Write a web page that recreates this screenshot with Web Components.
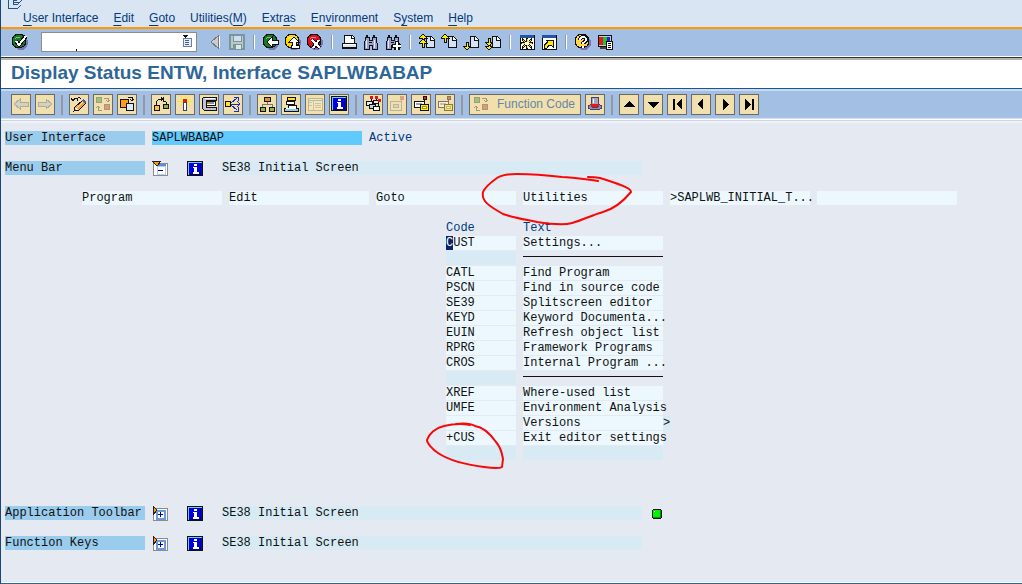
<!DOCTYPE html>
<html lang="en">
<head>
<meta charset="utf-8">
<title>Display Status ENTW, Interface SAPLWBABAP</title>
<style>
  body {
    margin: 0;
    font-family: "Liberation Sans", Arial, sans-serif;
    font-size: 12px;
    background: #e5eaf2;
  }
</style>
</head>
<body>
<status-window></status-window>

<script>
/**
 * Icon drawings, all on a 16x16 grid.
 */
const shadow = '<circle cx="9" cy="9" r="7" fill="#7878b4"/>'
const page = '<path d="M7 2h5l3 3v8H7z" fill="#d4e4f6" stroke="#111"/><path d="M11 2v4h4" fill="#fff" stroke="#111"/>'
const binoculars = '<path d="M2 3h4v3h3V3h4v4l1 2v6H9v-4H6v4H1V9l1-2z" fill="#9aa0c8" stroke="#111"/><path d="M3 1h2v2H3zM10 1h2v2h-2zM6 8h3v1H6z" fill="#111"/><path d="M3 6v8M11 6v8" stroke="#e4e8fa"/>'
const upArrow = '<path d="M4 0l4 4H5v4H3V4H0z" fill="#ffeb00" stroke="#111"/>'
const downArrow = '<path d="M4 16l4-4H5V8H3v4H0z" fill="#ffeb00" stroke="#111"/>'
const folders = '<path d="M1 5h10v6H1z" fill="#fff" stroke="#111"/><path d="M3 7h6v2H3z" fill="#9aa0c8"/><path d="M7 8h8v6H7z" fill="#fff000" stroke="#111"/><path d="M9 10h4v2H9z" fill="#fff" stroke="#a89800"/><path d="M11 7V3" stroke="#111"/><path d="M10 0h4v4h-4z" fill="#111"/><path d="M11 1h2v2h-2z" fill="#e82020"/>'

const icons = {
  ok: shadow + '<circle cx="7" cy="7" r="7" fill="#187a28" stroke="#111"/><path d="M3 5l2-2h3" stroke="#7ccc66" fill="none"/><path d="M4 7l3 4 7-9" fill="none" stroke="#111" stroke-width="4"/><path d="M4 7l3 4 7-9" fill="none" stroke="#fff" stroke-width="2"/>',
  triangle: '<path d="M11 2v12L4 8z" fill="#c8ccd4" stroke="#777"/><path d="M12 2v12" stroke="#fff"/>',
  save: '<path d="M1 1h14v14H1z" fill="#b4cbc6" stroke="#7c949c" stroke-width="2"/><path d="M4 1h8v6H4z" fill="#cfdff0" stroke="#7c949c"/><path d="M4 10h8v5H4z" fill="#dfe6ec" stroke="#7c949c"/><path d="M5 11h2v4H5z" fill="#7c949c"/>',
  back: shadow + '<circle cx="7" cy="7" r="7" fill="#187a28" stroke="#111"/><path d="M3 5l2-2h4" stroke="#7ccc66" fill="none"/><path d="M4 8l5-5v3h6v4H9v3z" fill="#fff" stroke="#111"/>',
  exit: shadow + '<circle cx="7" cy="7" r="7" fill="#ffd400" stroke="#111"/><path d="M3 5l2-2h4" stroke="#fff68a" fill="none"/><path d="M9 3l5 5h-3v3h3v3H6v-3h1V8H4z" fill="#fff" stroke="#111"/>',
  cancel: shadow + '<circle cx="7" cy="7" r="7" fill="#dc1020" stroke="#111"/><path d="M3 5l2-2h4" stroke="#ff8080" fill="none"/><path d="M5 6l8 8M12 6l-6 8" stroke="#111" stroke-width="4"/><path d="M5 6l8 8M12 6l-6 8" stroke="#fff" stroke-width="2"/>',
  print: '<path d="M3 1h8l2 2v7H3z" fill="#fff" stroke="#111"/><path d="M10 1v3h3" fill="none" stroke="#111"/><path d="M1 9h14v5H1z" fill="#dde4f0" stroke="#111"/><path d="M2 10h12" stroke="#fff"/><path d="M2 14h13" stroke="#111" stroke-width="2"/>',
  find: binoculars,
  findNext: binoculars + '<path d="M10 7h3v3h3v3h-3v3h-3v-3H7v-3h3z" fill="#fff" stroke="#111"/>',
  firstPage: page + upArrow + '<path d="M4 5l4 4H5v4H3V9H0z" fill="#ffeb00" stroke="#111"/>',
  prevPage: page + upArrow,
  nextPage: page + downArrow,
  lastPage: page + downArrow + '<path d="M4 12l4-4H5V4H3v4H0z" fill="#ffeb00" stroke="#111"/>',
  session: '<path d="M1 1h14v14H1z" fill="#fff" stroke="#111"/><path d="M1 1h14v3H1z" fill="#2454a4"/><path d="M3 5l10 9M13 5L3 14M8 4v11M2 9h12" stroke="#111" stroke-width="2"/><path d="M4 6l8 7M12 6l-8 7M8 5v9M3 9h10" stroke="#ffeb00"/><path d="M6 8h4v3H6z" fill="#fff"/>',
  shortcut: '<path d="M1 1h14v14H1z" fill="#fff" stroke="#111"/><path d="M1 1h14v3H1z" fill="#2454a4"/><path d="M3 14c0-4 2-5 4-6L5 6h7v7l-2-2c-3 0-3 1-4 3z" fill="#ffeb00" stroke="#111"/>',
  help: shadow + '<circle cx="7" cy="7" r="7" fill="#ffd850" stroke="#111"/><path d="M5 6c0-4 6-4 6 0 0 2-3 2-3 4M8 12v2" fill="none" stroke="#111" stroke-width="4"/><path d="M5 6c0-4 6-4 6 0 0 2-3 2-3 4M8 12v2" fill="none" stroke="#fff" stroke-width="2"/>',
  layout: '<path d="M1 1h13v11H1z" fill="#c8ccd8" stroke="#111"/><path d="M2 3h4v8H2z" fill="#e81818"/><path d="M6 3h4v8H6z" fill="#18c828"/><path d="M10 3h3v5h-3z" fill="#2020e0"/><path d="M3 13h6v2H3z" fill="#444"/><path d="M9 7h6v8H9z" fill="#fff" stroke="#111"/><path d="M11 9h3M11 11h3M11 13h3" stroke="#111"/>',
  arrowLeft: '<path d="M1 8l6-5v3h8v4H7v3z" fill="#b4c6d0" stroke="#6c7c88"/>',
  arrowRight: '<path d="M15 8L9 3v3H1v4h8v3z" fill="#b4c6d0" stroke="#6c7c88"/>',
  display: '<path d="M0 2l2 3 2-3 2 1 2-2 2 2M6 3v2" fill="none" stroke="#111"/><path d="M12 4l3 3-7 7-5 1 1-4z" fill="#f4a038" stroke="#111"/><path d="M12 6l-6 6" stroke="#ffe4b0"/><path d="M4 12l3 2" stroke="#fff"/><path d="M12 4l3 3" stroke="#4060c0" stroke-width="2"/>',
  cycle: '<circle cx="4" cy="4" r="3" fill="#3cb43c" stroke="#555"/><circle cx="12" cy="11" r="3" fill="#d85030" stroke="#555"/><path d="M9 2h4v4M11 4l2 2 2-2M7 14H3v-4M1 12l2-2 2 2" fill="none" stroke="#555"/>',
  other: '<path d="M1 3h8v8H1z" fill="#ff9c18" stroke="#111"/><path d="M7 7h7v7H7z" fill="#dcecff" stroke="#111"/><path d="M9 1h4v4M11 3l2 2 2-2" fill="none" stroke="#111"/>',
  path: '<path d="M3 9V6l3-3h2M10 1v4l3 1v2" fill="none" stroke="#111"/><path d="M8 1l3 2-3 2z" fill="#111"/><path d="M1 9h5v5H1z" fill="#ffc040" stroke="#111"/><path d="M10 8h5v4h-5z" fill="#90b040" stroke="#111"/>',
  wand: '<path d="M8 0v4M1 5h14M3 0l10 10M13 0L3 10" stroke="#fff000"/><path d="M6 3h4v3H6z" fill="#e81818"/><path d="M6 6h4v9H6z" fill="#3c3c78"/><path d="M7 7h2v7H7z" fill="#fff"/>',
  clamp: '<path d="M3 1h12v3H5v7h10v3H3l-2-2V3z" fill="#bcc4d8" stroke="#111"/><path d="M5 5h9v4H5z" fill="#fff" stroke="#111"/><path d="M6 6h3v2H6z" fill="#e08020"/><path d="M9 6h4v2H9z" fill="#8090c0"/><path d="M4 2h10" stroke="#fff"/>',
  spread: '<path d="M5 8h10M6 7l6-5M6 9l6 5" stroke="#1830b0"/><path d="M9 1h4v4M9 15h4v-4M12 5l3 3-3 3" fill="none" stroke="#1830b0"/><path d="M0 5h6v6H0z" fill="#111"/><path d="M1 6h4v4H1z" fill="#ffe028"/>',
  hierarchy: '<path d="M8 5v4M3 11V8h10v3" fill="none" stroke="#777"/><path d="M5 1h6v4H5z" fill="#e88c28" stroke="#111"/><path d="M1 11h5v4H1zM10 11h5v4h-5z" fill="#98b040" stroke="#111"/>',
  stack: '<path d="M4 1h8v3H4z" fill="#ffe028" stroke="#111"/><path d="M3 5h8v3H3zM5 9h8v3H5z" fill="#fff" stroke="#111"/><path d="M1 12h14v3H1z" fill="#90c8e8" stroke="#111"/><path d="M3 12h10v1H3z" fill="#fff"/>',
  list: '<path d="M1 2h14v12H1z" fill="#f7edd1" stroke="#918b78"/><path d="M1 4h14" stroke="#58a0a8"/><path d="M6 4v10M2 6h3M2 9h3M8 7h6M8 9h6M8 11h6" stroke="#a6a08b"/>',
  info: '<path d="M0 0h16v15H0z" fill="#111"/><path d="M1 1h14v13H1z" fill="#0000d8"/><path d="M1 1h14v1H2v12H1z" fill="#68d0f8"/><path d="M14 2v12H2v-1h11V2z" fill="#000078"/><rect x="7" y="3" width="3" height="2" fill="#fff"/><rect x="6" y="6" width="4" height="1" fill="#fff"/><rect x="7" y="7" width="3" height="4" fill="#fff"/><rect x="6" y="11" width="6" height="2" fill="#fff"/>',
  cluster: '<path d="M1 5h6v4H1zM8 4h5v3H8z" fill="#e8eaf8" stroke="#111"/><path d="M4 8h6v4H4z" fill="#c8cce4" stroke="#111"/><path d="M8 10h6v4H8z" fill="#fff" stroke="#111"/><path d="M6 5V2M11 5V2M13 10V6" stroke="#111"/><path d="M5 0h3v3H5zM10 0h3v3h-3zM13 3h3v3h-3z" fill="#d81818"/>',
  single: '<path d="M1 5h11v9H1z" fill="#eee0b8" stroke="#888"/><path d="M4 8h5v3H4z" fill="#d5c9a3" stroke="#888"/><path d="M12 6V2" stroke="#888"/><path d="M11 0h4v4h-4z" fill="#c86858"/>',
  folders: folders,
  hat: '<ellipse cx="8" cy="11" rx="7" ry="3" fill="#8c8cc0" stroke="#444466"/><path d="M4 2c2-1 6-1 8 0l-1 9c-2 1-4 1-6 0z" fill="#a4a4c4" stroke="#444466"/><path d="M4 7c2 2 6 2 8 0v3c-2 2-6 2-8 0z" fill="#e81818"/><path d="M6 3v4" stroke="#fff"/>',
  up: '<path d="M8 5l6 6H2z"/>',
  down: '<path d="M8 12L2 6h12z"/>',
  first: '<path d="M4 3h2v11H4zM13 3v11L7 8z"/>',
  prev: '<path d="M10 3v11L4 8z"/>',
  next: '<path d="M6 3v11l6-6z"/>',
  last: '<path d="M11 3h2v11h-2zM4 3v11l6-6z"/>',
  collapse: '<path d="M1 2h14v12H1z" fill="#fff" stroke="#8c8c8c"/><path d="M5 5h8v8H5z" fill="#fff" stroke="#b8ccf0"/><path d="M5 4h9" stroke="#5888d8" stroke-width="2"/><path d="M6 9h5" stroke="#000090"/><path d="M0 0h9L5 5z" fill="#ff9c00" stroke="#222"/>',
  expand: '<path d="M1 2h14v12H1z" fill="#fff" stroke="#8c8c8c"/><path d="M5 5h8v8H5z" fill="#fff" stroke="#6898e0" stroke-width="2"/><path d="M6 8h5v1H6zM8 6h1v5H8z" fill="#000090"/><path d="M1 0v9l4-5z" fill="#ff9c00" stroke="#222"/>',
  led: '<path d="M4 3h8v1h1v8h-1v1H4v-1H3V4h1z" fill="#111"/><path d="M4 4h8v8H4z" fill="#009000"/><path d="M4 4h7v7H4z" fill="#00f400"/><path d="M5 5h1v1H5z" fill="#fff"/>',
  window: '<path d="M1 0v8h10l3-3" fill="none" stroke="#245486"/><path d="M15 0l-4 4H6V0h4" fill="none" stroke="#245486"/><path d="M6 2h6" stroke="#245486"/>',
  history: '<path d="M5 4h8v8H5z" fill="#e6eef8" stroke="#68809c"/><path d="M7 6h4M7 8h4M7 10h4" stroke="#446088"/><path d="M4 1h6L7 4z" fill="#111"/>'
}

customElements.define('sap-icon',
  class extends HTMLElement {
    constructor () {
      super()
      this.attachShadow({ mode: 'open' })
      this.shadowRoot.innerHTML = `
        <style>
          :host { display: block; width: 16px; height: 16px; flex: none; }
          svg { display: block; }
        </style>
        <svg width="16" height="16" viewBox="0 0 16 16" aria-hidden="true"
          shape-rendering="crispEdges">${icons[this.getAttribute('name')]}</svg>`
    }
  }
)

/**
 * Menu bar entry, the access key is underlined.
 */
customElements.define('menu-entry',
  class extends HTMLElement {
    constructor () {
      super()
      this.attachShadow({ mode: 'open' })
      this.shadowRoot.innerHTML = `
        <style>
          :host { display: block; }
          button {
            border: 0;
            padding: 0;
            background: none;
            font: inherit;
            color: inherit;
            line-height: 16px;
          }
          ::slotted(u) { text-underline-offset: 3px; }
        </style>
        <button type="button" role="menuitem"><slot></slot></button>`
    }
  }
)

customElements.define('menu-bar',
  class extends HTMLElement {
    constructor () {
      super()
      this.attachShadow({ mode: 'open' })
      this.shadowRoot.innerHTML = `
        <style>
          :host {
            display: block;
            height: 27px;
            background: #dae5f3;
            border-bottom: 2px solid #ff9900;
            color: #003a7c;
            overflow: hidden;
          }
          .system { height: 10px; padding-left: 6px; overflow: hidden; }
          nav { display: flex; gap: 15px; padding-left: 22px; }
        </style>
        <div class="system"><sap-icon name="window"></sap-icon></div>
        <nav role="menubar" aria-label="Main menu">
          <menu-entry><u>U</u>ser Interface</menu-entry>
          <menu-entry><u>E</u>dit</menu-entry>
          <menu-entry><u>G</u>oto</menu-entry>
          <menu-entry>Utilities(<u>M</u>)</menu-entry>
          <menu-entry>Extr<u>a</u>s</menu-entry>
          <menu-entry>En<u>v</u>ironment</menu-entry>
          <menu-entry>S<u>y</u>stem</menu-entry>
          <menu-entry><u>H</u>elp</menu-entry>
        </nav>`
    }
  }
)

/**
 * Toolbar button. With the attribute flat it has no frame.
 */
customElements.define('tool-button',
  class extends HTMLElement {
    constructor () {
      super()
      this.attachShadow({ mode: 'open' })
      this.shadowRoot.innerHTML = `
        <style>
          :host { display: block; flex: none; }
          button {
            display: flex;
            align-items: center;
            justify-content: center;
            gap: 8px;
            box-sizing: border-box;
            min-width: 20px;
            height: 21px;
            padding: 1px 1px 2px;
            border: 1px solid #6c6a60;
            background: #f2dfae;
            font: inherit;
            line-height: 16px;
            color: #6488a4;
          }
          :host([flat]) button {
            min-width: 16px;
            height: 20px;
            padding: 2px 0;
            border: 0;
            background: none;
          }
          :host([wide]) button { padding: 1px 5px 2px 3px; }
          :host([disabled]) sap-icon { opacity: .5; }
        </style>
        <button type="button"><sap-icon name="${this.getAttribute('icon')}"></sap-icon><slot></slot></button>`
      const button = this.shadowRoot.querySelector('button')
      button.disabled = this.hasAttribute('disabled')
      button.setAttribute('aria-label', this.textContent || this.getAttribute('icon'))
    }
  }
)

customElements.define('tool-separator',
  class extends HTMLElement {
    constructor () {
      super()
      this.attachShadow({ mode: 'open' })
      this.shadowRoot.innerHTML = `
        <style>
          :host {
            display: block;
            box-sizing: border-box;
            width: 2px;
            margin: 0 2px;
            height: var(--separator-height, 20px);
            background: #94999f;
            border-right: 1px solid var(--separator-light, #94999f);
          }
        </style>`
    }
  }
)

customElements.define('command-field',
  class extends HTMLElement {
    constructor () {
      super()
      this.attachShadow({ mode: 'open' })
      this.shadowRoot.innerHTML = `
        <style>
          :host {
            display: flex;
            align-items: center;
            box-sizing: border-box;
            width: 156px;
            height: 20px;
            margin: 0 4px 0 7px;
            padding-right: 2px;
            border: 1px solid #8c8c8c;
            background: linear-gradient(#111, #111) 34px 16px / 1px 2px no-repeat #fff;
          }
          input {
            flex: 1;
            min-width: 0;
            height: 16px;
            border: 0;
            background: none;
            font: inherit;
            outline: 0;
          }
        </style>
        <input type="text" aria-label="Command">
        <sap-icon name="history"></sap-icon>`
    }
  }
)

customElements.define('standard-toolbar',
  class extends HTMLElement {
    constructor () {
      super()
      this.attachShadow({ mode: 'open' })
      this.shadowRoot.innerHTML = `
        <style>
          :host {
            --separator-height: 14px;
            --separator-light: #fff;
            display: flex;
            align-items: center;
            gap: 6px;
            height: 26px;
            padding: 0 0 1px 11px;
            background: #a3bfe3;
            border-bottom: 1px solid #fff;
          }
        </style>
        <tool-button flat icon="ok"></tool-button>
        <command-field></command-field>
        <tool-button flat icon="triangle"></tool-button>
        <tool-button flat icon="save"></tool-button>
        <tool-separator></tool-separator>
        <tool-button flat icon="back"></tool-button>
        <tool-button flat icon="exit"></tool-button>
        <tool-button flat icon="cancel"></tool-button>
        <tool-separator></tool-separator>
        <tool-button flat icon="print"></tool-button>
        <tool-button flat icon="find"></tool-button>
        <tool-button flat icon="findNext"></tool-button>
        <tool-separator></tool-separator>
        <tool-button flat icon="firstPage"></tool-button>
        <tool-button flat icon="prevPage"></tool-button>
        <tool-button flat icon="nextPage"></tool-button>
        <tool-button flat icon="lastPage"></tool-button>
        <tool-separator></tool-separator>
        <tool-button flat icon="session"></tool-button>
        <tool-button flat icon="shortcut"></tool-button>
        <tool-separator></tool-separator>
        <tool-button flat icon="help"></tool-button>
        <tool-button flat icon="layout"></tool-button>`
    }
  }
)

customElements.define('screen-title',
  class extends HTMLElement {
    constructor () {
      super()
      this.attachShadow({ mode: 'open' })
      this.shadowRoot.innerHTML = `
        <style>
          :host {
            display: block;
            background: #fff;
            border-top: 1px solid #333;
            border-bottom: 1px solid #1c5690;
            box-shadow: inset 0 2px #b4b4b4;
          }
          h1 {
            margin: 0;
            padding: 1px 10px;
            font-size: 19px;
            line-height: 28px;
            color: #2f6698;
            white-space: nowrap;
          }
        </style>
        <h1><slot></slot></h1>`
    }
  }
)

customElements.define('application-toolbar',
  class extends HTMLElement {
    constructor () {
      super()
      this.attachShadow({ mode: 'open' })
      this.shadowRoot.innerHTML = `
        <style>
          :host {
            display: flex;
            align-items: center;
            gap: 4px;
            height: 27px;
            padding-left: 10px;
            background: #a3bfe3;
            border-top: 2px solid #c9daf0;
            border-bottom: 1px solid #d0deee;
            box-shadow: 0 1px #fff, 0 2px #c8d8e8, 0 4px #f0f2f6;
          }
        </style>
        <tool-button disabled icon="arrowLeft"></tool-button>
        <tool-button disabled icon="arrowRight"></tool-button>
        <tool-separator></tool-separator>
        <tool-button icon="display"></tool-button>
        <tool-button disabled icon="cycle"></tool-button>
        <tool-button icon="other"></tool-button>
        <tool-separator></tool-separator>
        <tool-button icon="path"></tool-button>
        <tool-button icon="wand"></tool-button>
        <tool-button icon="clamp"></tool-button>
        <tool-button icon="spread"></tool-button>
        <tool-separator></tool-separator>
        <tool-button icon="hierarchy"></tool-button>
        <tool-button icon="stack"></tool-button>
        <tool-button disabled icon="list"></tool-button>
        <tool-button icon="info"></tool-button>
        <tool-separator></tool-separator>
        <tool-button icon="cluster"></tool-button>
        <tool-button disabled icon="single"></tool-button>
        <tool-button icon="folders"></tool-button>
        <tool-button disabled icon="folders"></tool-button>
        <tool-separator></tool-separator>
        <tool-button disabled wide icon="cycle">Function Code</tool-button>
        <tool-button icon="hat"></tool-button>
        <tool-separator></tool-separator>
        <tool-button icon="up"></tool-button>
        <tool-button icon="down"></tool-button>
        <tool-button icon="first"></tool-button>
        <tool-button icon="prev"></tool-button>
        <tool-button icon="next"></tool-button>
        <tool-button icon="last"></tool-button>`
    }
  }
)

/**
 * One output field of the list. The attribute kind sets the colour.
 */
customElements.define('list-field',
  class extends HTMLElement {
    constructor () {
      super()
      this.attachShadow({ mode: 'open' })
      this.shadowRoot.innerHTML = `
        <style>
          :host {
            display: block;
            flex: none;
            width: 140px;
            height: 14px;
            line-height: 14px;
            white-space: nowrap;
            background: #ecf8fd;
          }
          :host([kind="label"]) { background: #9accee; }
          :host([kind="key"]) { width: 210px; background: #60caff; }
          :host([kind="text"]) { width: 420px; background: #d8ebf5; }
          :host([kind="plain"]) { background: none; color: #003a7c; }
        </style>
        <slot></slot>`
    }
  }
)

/**
 * Part of the list that can be opened or closed.
 */
customElements.define('status-section',
  class extends HTMLElement {
    constructor () {
      super()
      this.attachShadow({ mode: 'open' })
      this.shadowRoot.innerHTML = `
        <style>
          :host { display: flex; align-items: flex-start; height: 15px; }
          button { border: 0; padding: 0; background: none; height: 16px; }
          .toggle { margin-left: 7px; }
          .info { margin: 0 19px; }
          ::slotted(sap-icon) { margin-left: 7px; }
        </style>
        <list-field kind="label">${this.getAttribute('label')}</list-field>
        <button type="button" class="toggle" aria-label="Expand or collapse">
          <sap-icon name="${this.hasAttribute('open') ? 'collapse' : 'expand'}"></sap-icon>
        </button>
        <button type="button" class="info" aria-label="Information"><sap-icon name="info"></sap-icon></button>
        <list-field kind="text">${this.getAttribute('text')}</list-field>
        <slot></slot>`
    }
  }
)

customElements.define('function-table',
  class extends HTMLElement {
    constructor () {
      super()
      this.attachShadow({ mode: 'open' })
      // An entry of null is a separator line.
      const entries = [
        ['CUST', 'Settings...'],
        null,
        ['CATL', 'Find Program'],
        ['PSCN', 'Find in source code'],
        ['SE39', 'Splitscreen editor'],
        ['KEYD', 'Keyword Documenta...'],
        ['EUIN', 'Refresh object list'],
        ['RPRG', 'Framework Programs'],
        ['CROS', 'Internal Program ...'],
        null,
        ['XREF', 'Where-used list'],
        ['UMFE', 'Environment Analysis'],
        ['', 'Versions', '>'],
        ['+CUS', 'Exit editor settings'],
        ['', '', '', 'empty']
      ]
      this.shadowRoot.innerHTML = `
        <style>
          :host { display: block; }
          table { border-collapse: separate; border-spacing: 0; table-layout: fixed; width: 224px; }
          th, td {
            padding: 0;
            height: 14px;
            line-height: 14px;
            text-align: left;
            white-space: nowrap;
            background: #ecf8fd;
            border-bottom: 1px solid #e5eaf2;
          }
          th { font-weight: normal; color: #003a7c; background: none; }
          .code { width: 70px; }
          .gap { width: 7px; background: none; }
          .text { width: 140px; }
          .more { width: 7px; background: none; }
          .more.on, .blank, .empty .code, .empty .text { background: #d8ebf5; }
          .line { background: none; }
          hr { margin: 0 0 4px; border: 0; height: 1px; background: #111; }
          .cursor { background: #0a246a; color: #fff; }
        </style>
        <table>
          <tr><th class="code">Code</th><th class="gap"></th><th class="text">Text</th><th class="more"></th></tr>
        </table>`

      const table = this.shadowRoot.querySelector('table')
      entries.forEach((entry, index) => {
        const row = table.insertRow()
        if (entry === null) {
          row.innerHTML = '<td class="blank"></td><td class="gap"></td><td class="line"><hr></td><td class="more"></td>'
          return
        }
        const [code, text, more, state] = entry
        row.className = state || ''
        const shown = index === 0 ? `<span class="cursor">${code[0]}</span>${code.slice(1)}` : code
        row.innerHTML = `<td class="code">${shown}</td><td class="gap"></td><td class="text">${text}</td>
          <td class="more ${more ? 'on' : ''}">${more || ''}</td>`
      })
    }
  }
)

/**
 * Pen marks that lie over the list.
 */
customElements.define('pen-marks',
  class extends HTMLElement {
    constructor () {
      super()
      this.attachShadow({ mode: 'open' })
      this.shadowRoot.innerHTML = `
        <style>
          :host { position: absolute; top: 0; left: 0; pointer-events: none; }
          svg { display: block; }
        </style>
        <svg width="660" height="360" fill="none" stroke="#f80808" stroke-width="2" stroke-linecap="round" stroke-linejoin="round" aria-hidden="true">
          <path d="M597 62C582 60 572 58 561 58C544 56 531 55 516 55C506 55 499 57 496 59C489 64 484 68 482 73C480 82 488 87 502 95C513 99 527 101 536 103C549 105 564 106 571 104C582 101 591 96 602 93C612 90 621 84 630 73C631 69 612 63 599 59C594 58 590 58 587 58"/>
          <path d="M455 305C463 304 469 304 474 307C483 308 490 316 495 323C501 330 501 336 502 340L501 348C498 350 490 349 483 348C467 346 449 342 437 334C431 330 426 324 426 321C428 315 434 309 443 307C451 305 459 304 469 306"/>
        </svg>`
    }
  }
)

customElements.define('status-list',
  class extends HTMLElement {
    constructor () {
      super()
      this.attachShadow({ mode: 'open' })
      this.shadowRoot.innerHTML = `
        <style>
          :host {
            display: flex;
            flex-direction: column;
            gap: 15px;
            flex: 1;
            position: relative;
            padding: 12px 4px 0;
            font-family: "Liberation Mono", "Courier New", monospace;
            font-size: 12px;
            color: #111;
          }
          .fields { display: flex; gap: 7px; height: 15px; }
          .menus { padding-left: 77px; }
          function-table { padding: 0 0 30px 441px; }
        </style>
        <div class="fields">
          <list-field kind="label">User Interface</list-field>
          <list-field kind="key">SAPLWBABAP</list-field>
          <list-field kind="plain">Active</list-field>
        </div>
        <status-section open label="Menu Bar" text="SE38 Initial Screen"></status-section>
        <div class="fields menus">
          <list-field>Program</list-field>
          <list-field>Edit</list-field>
          <list-field>Goto</list-field>
          <list-field>Utilities</list-field>
          <list-field>&gt;SAPLWB_INITIAL_T...</list-field>
          <list-field></list-field>
        </div>
        <function-table></function-table>
        <status-section label="Application Toolbar" text="SE38 Initial Screen">
          <sap-icon name="led"></sap-icon>
        </status-section>
        <status-section label="Function Keys" text="SE38 Initial Screen"></status-section>
        <pen-marks></pen-marks>`
    }
  }
)

customElements.define('status-window',
  class extends HTMLElement {
    constructor () {
      super()
      this.attachShadow({ mode: 'open' })
      this.shadowRoot.innerHTML = `
        <style>
          :host {
            display: flex;
            flex-direction: column;
            box-sizing: border-box;
            min-height: 100vh;
            border-left: 1px solid #1c4474;
          }
          footer { height: 1px; border-top: 1px solid #fff; background: #2f6698; }
        </style>
        <menu-bar></menu-bar>
        <standard-toolbar></standard-toolbar>
        <screen-title>Display Status ENTW, Interface SAPLWBABAP</screen-title>
        <application-toolbar></application-toolbar>
        <status-list></status-list>
        <footer></footer>`
    }
  }
)
</script>
</body>
</html>
